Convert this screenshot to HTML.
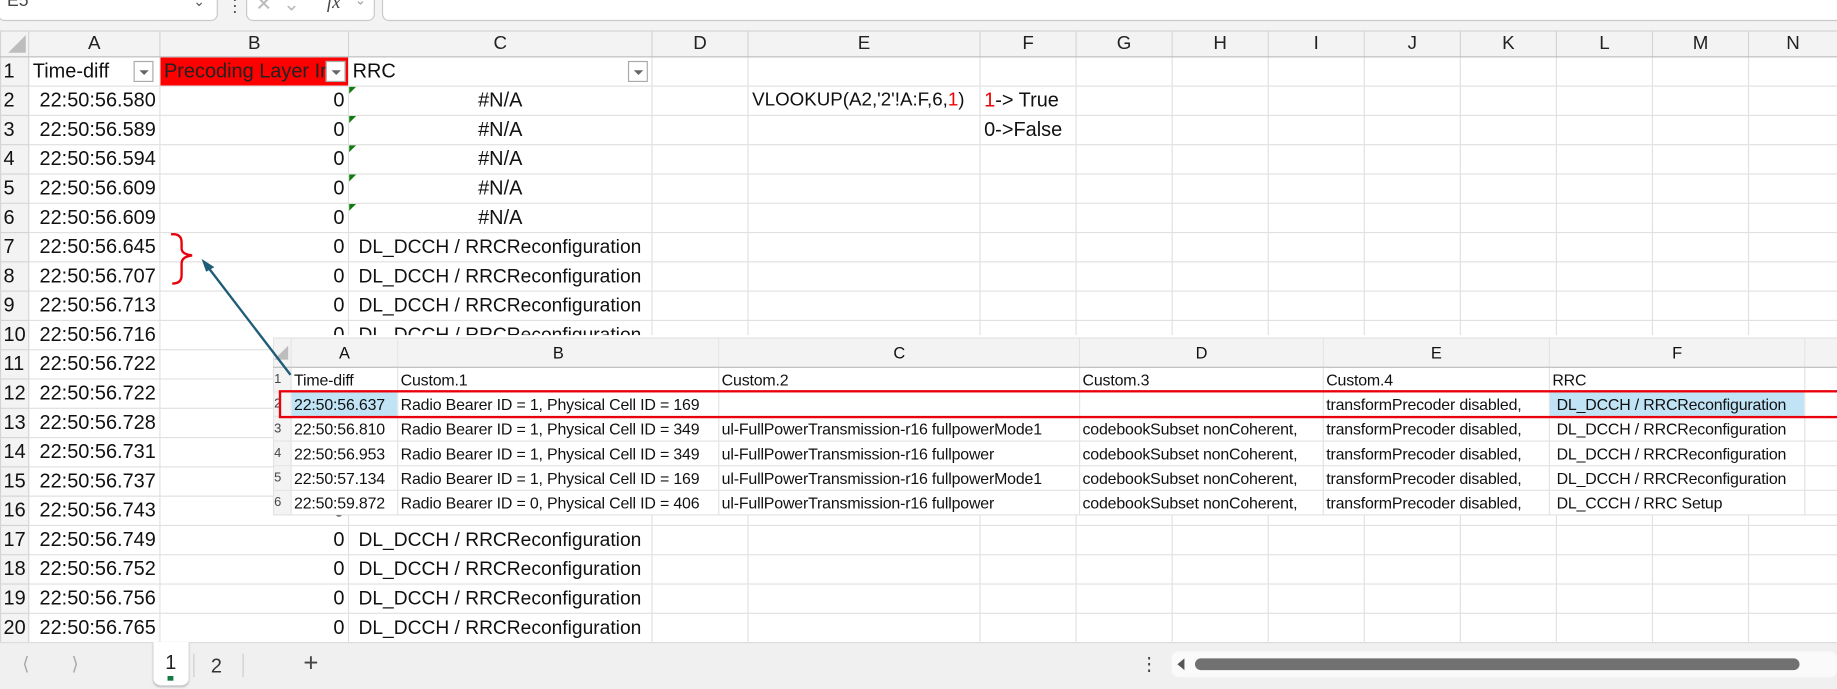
<!DOCTYPE html>
<html><head><meta charset="utf-8"><style>
html,body{margin:0;padding:0;width:1837px;height:689px;overflow:hidden;background:#fff}
#s{position:absolute;left:0;top:0;width:1568px;height:588px;transform:scale(1.17156);transform-origin:0 0;background:#f3f3f3;font-family:"Liberation Sans",sans-serif;color:#111;overflow:hidden}
.abs{position:absolute}
table{border-collapse:collapse;table-layout:fixed}
#m{position:absolute;left:0;top:26px;background:#fff;width:1568px}
#m td{border:1px solid #e1e1e1;height:25px;padding:0 3px;font-size:17px;white-space:nowrap;overflow:hidden;box-sizing:border-box}
#m tr.h td{background:#f3f3f3;height:22px;text-align:center;font-size:16px;color:#222;border-color:#d4d4d4;border-bottom:1px solid #bbb}
#m td.rn{background:#f3f3f3;text-align:left;padding-left:2px;font-size:17px;border-right:1px solid #bbb;border-color:#d4d4d4}
.r{text-align:right}.c{text-align:center}
.cc{padding-left:8px!important;font-size:16.4px!important}
.fb{position:absolute;width:17px;height:18px;border:1px solid #aaa;background:#fff;box-sizing:border-box;top:3px}
.fb:after{content:"";position:absolute;left:4px;top:7px;border-left:4px solid transparent;border-right:4px solid transparent;border-top:4px solid #666}
.tri{position:relative}
.tri:before{content:"";position:absolute;left:0;top:0;border-right:6px solid transparent;border-top:6px solid #107c10}
#o{position:absolute;left:233px;top:286px;width:1335px;height:153px;background:#fff}
#o table{position:absolute;left:0;top:2px;background:#fff;width:1335px}
#o td{border:1px solid #e3e3e3;height:21px;padding:0 2px;font-size:13.6px;letter-spacing:-0.15px;white-space:nowrap;overflow:hidden;box-sizing:border-box}
#o tr.h td{background:#f3f3f3;height:25px;text-align:center;font-size:14px;border-bottom:1px solid #bbb}
#o td.rn{background:#f3f3f3;font-size:11px;color:#444;padding:0}
.bl{background:#c0e4f5}
</style></head><body><div id="s">
<div class="abs" style="left:-2px;top:-10px;width:186px;height:26px;background:#fff;border:1px solid #c8c8c8;border-radius:6px"></div>
<div class="abs" style="left:6px;top:-8px;font-size:15px;color:#444">E5</div>
<div class="abs" style="left:165px;top:-6px;font-size:12px;color:#555">&#8964;</div>
<div class="abs" style="left:193px;top:-4px;font-size:15px;color:#555">&#8942;</div>
<div class="abs" style="left:210px;top:-10px;width:108px;height:26px;background:#fff;border:1px solid #c8c8c8;border-radius:6px"></div>
<div class="abs" style="left:218px;top:-6px;font-size:17px;color:#bbb">&#10005;&nbsp;&nbsp;&#8964;</div>
<div class="abs" style="left:279px;top:-6px;font-size:16px;font-style:italic;font-family:'Liberation Serif',serif;color:#444">fx</div>
<div class="abs" style="left:303px;top:-6px;font-size:11px;color:#999">&#8964;</div>
<div class="abs" style="left:326px;top:-10px;width:1250px;height:26px;background:#fff;border:1px solid #c8c8c8;border-radius:6px"></div>

<table id="m">
<colgroup><col style="width:24px"><col style="width:112px"><col style="width:161px"><col style="width:259px"><col style="width:82px"><col style="width:198px"><col style="width:82px"><col style="width:82px"><col style="width:82px"><col style="width:82px"><col style="width:82px"><col style="width:82px"><col style="width:82px"><col style="width:82px"><col style="width:76px"></colgroup>
<tr class="h"><td style="background:#f3f3f3"><div style="width:0;height:0;border-left:15px solid transparent;border-bottom:15px solid #bdbdbd;margin-left:3px"></div></td><td>A</td><td>B</td><td>C</td><td>D</td><td>E</td><td>F</td><td>G</td><td>H</td><td>I</td><td>J</td><td>K</td><td>L</td><td>M</td><td>N</td></tr>
<tr><td class="rn">1</td><td style="position:relative">Time-diff<span class="fb" style="left:89px"></span></td><td style="position:relative;background:#ff0000;color:#222">Precoding Layer In<span class="fb" style="left:141px"></span></td><td style="position:relative">RRC<span class="fb" style="left:238px"></span></td><td></td><td></td><td></td><td></td><td></td><td></td><td></td><td></td><td></td><td></td><td></td></tr>
<tr><td class="rn">2</td><td class="r">22:50:56.580</td><td class="r">0</td><td class="c tri">#N/A</td><td></td><td style="font-size:16px">VLOOKUP(A2,'2'!A:F,6,<span style="color:#e00">1</span>)</td><td><span style="color:#e00">1</span>-&gt; True</td><td></td><td></td><td></td><td></td><td></td><td></td><td></td><td></td></tr>
<tr><td class="rn">3</td><td class="r">22:50:56.589</td><td class="r">0</td><td class="c tri">#N/A</td><td></td><td></td><td>0-&gt;False</td><td></td><td></td><td></td><td></td><td></td><td></td><td></td><td></td></tr>
<tr><td class="rn">4</td><td class="r">22:50:56.594</td><td class="r">0</td><td class="c tri">#N/A</td><td></td><td></td><td></td><td></td><td></td><td></td><td></td><td></td><td></td><td></td><td></td></tr>
<tr><td class="rn">5</td><td class="r">22:50:56.609</td><td class="r">0</td><td class="c tri">#N/A</td><td></td><td></td><td></td><td></td><td></td><td></td><td></td><td></td><td></td><td></td><td></td></tr>
<tr><td class="rn">6</td><td class="r">22:50:56.609</td><td class="r">0</td><td class="c tri">#N/A</td><td></td><td></td><td></td><td></td><td></td><td></td><td></td><td></td><td></td><td></td><td></td></tr>
<tr><td class="rn">7</td><td class="r">22:50:56.645</td><td class="r">0</td><td class="cc">DL_DCCH / RRCReconfiguration</td><td></td><td></td><td></td><td></td><td></td><td></td><td></td><td></td><td></td><td></td><td></td></tr>
<tr><td class="rn">8</td><td class="r">22:50:56.707</td><td class="r">0</td><td class="cc">DL_DCCH / RRCReconfiguration</td><td></td><td></td><td></td><td></td><td></td><td></td><td></td><td></td><td></td><td></td><td></td></tr>
<tr><td class="rn">9</td><td class="r">22:50:56.713</td><td class="r">0</td><td class="cc">DL_DCCH / RRCReconfiguration</td><td></td><td></td><td></td><td></td><td></td><td></td><td></td><td></td><td></td><td></td><td></td></tr>
<tr><td class="rn">10</td><td class="r">22:50:56.716</td><td class="r">0</td><td class="cc">DL_DCCH / RRCReconfiguration</td><td></td><td></td><td></td><td></td><td></td><td></td><td></td><td></td><td></td><td></td><td></td></tr>
<tr><td class="rn">11</td><td class="r">22:50:56.722</td><td class="r">0</td><td></td><td></td><td></td><td></td><td></td><td></td><td></td><td></td><td></td><td></td><td></td><td></td></tr>
<tr><td class="rn">12</td><td class="r">22:50:56.722</td><td class="r">0</td><td></td><td></td><td></td><td></td><td></td><td></td><td></td><td></td><td></td><td></td><td></td><td></td></tr>
<tr><td class="rn">13</td><td class="r">22:50:56.728</td><td class="r">0</td><td></td><td></td><td></td><td></td><td></td><td></td><td></td><td></td><td></td><td></td><td></td><td></td></tr>
<tr><td class="rn">14</td><td class="r">22:50:56.731</td><td class="r">0</td><td></td><td></td><td></td><td></td><td></td><td></td><td></td><td></td><td></td><td></td><td></td><td></td></tr>
<tr><td class="rn">15</td><td class="r">22:50:56.737</td><td class="r">0</td><td></td><td></td><td></td><td></td><td></td><td></td><td></td><td></td><td></td><td></td><td></td><td></td></tr>
<tr><td class="rn">16</td><td class="r">22:50:56.743</td><td class="r">0</td><td></td><td></td><td></td><td></td><td></td><td></td><td></td><td></td><td></td><td></td><td></td><td></td></tr>
<tr><td class="rn">17</td><td class="r">22:50:56.749</td><td class="r">0</td><td class="cc">DL_DCCH / RRCReconfiguration</td><td></td><td></td><td></td><td></td><td></td><td></td><td></td><td></td><td></td><td></td><td></td></tr>
<tr><td class="rn">18</td><td class="r">22:50:56.752</td><td class="r">0</td><td class="cc">DL_DCCH / RRCReconfiguration</td><td></td><td></td><td></td><td></td><td></td><td></td><td></td><td></td><td></td><td></td><td></td></tr>
<tr><td class="rn">19</td><td class="r">22:50:56.756</td><td class="r">0</td><td class="cc">DL_DCCH / RRCReconfiguration</td><td></td><td></td><td></td><td></td><td></td><td></td><td></td><td></td><td></td><td></td><td></td></tr>
<tr><td class="rn">20</td><td class="r">22:50:56.765</td><td class="r">0</td><td class="cc">DL_DCCH / RRCReconfiguration</td><td></td><td></td><td></td><td></td><td></td><td></td><td></td><td></td><td></td><td></td><td></td></tr>
<tr><td class="rn"></td><td></td><td></td><td></td><td></td><td></td><td></td><td></td><td></td><td></td><td></td><td></td><td></td><td></td><td></td></tr>
</table>

<div id="o">
<table>
<colgroup><col style="width:15px"><col style="width:91px"><col style="width:274px"><col style="width:308px"><col style="width:208px"><col style="width:193px"><col style="width:218px"><col style="width:28px"></colgroup>
<tr class="h"><td class="rn"><div style="width:0;height:0;border-left:12px solid transparent;border-bottom:12px solid #bdbdbd"></div></td><td>A</td><td>B</td><td>C</td><td>D</td><td>E</td><td>F</td><td></td></tr>
<tr><td class="rn">1</td><td>Time-diff</td><td>Custom.1</td><td>Custom.2</td><td>Custom.3</td><td>Custom.4</td><td>RRC</td><td></td></tr>
<tr><td class="rn">2</td><td class="bl">22:50:56.637</td><td>Radio Bearer ID = 1, Physical Cell ID = 169</td><td></td><td></td><td>transformPrecoder disabled,</td><td class="bl">&nbsp;DL_DCCH / RRCReconfiguration</td><td></td></tr>
<tr><td class="rn">3</td><td>22:50:56.810</td><td>Radio Bearer ID = 1, Physical Cell ID = 349</td><td>ul-FullPowerTransmission-r16 fullpowerMode1</td><td>codebookSubset nonCoherent,</td><td>transformPrecoder disabled,</td><td>&nbsp;DL_DCCH / RRCReconfiguration</td><td></td></tr>
<tr><td class="rn">4</td><td>22:50:56.953</td><td>Radio Bearer ID = 1, Physical Cell ID = 349</td><td>ul-FullPowerTransmission-r16 fullpower</td><td>codebookSubset nonCoherent,</td><td>transformPrecoder disabled,</td><td>&nbsp;DL_DCCH / RRCReconfiguration</td><td></td></tr>
<tr><td class="rn">5</td><td>22:50:57.134</td><td>Radio Bearer ID = 1, Physical Cell ID = 169</td><td>ul-FullPowerTransmission-r16 fullpowerMode1</td><td>codebookSubset nonCoherent,</td><td>transformPrecoder disabled,</td><td>&nbsp;DL_DCCH / RRCReconfiguration</td><td></td></tr>
<tr><td class="rn">6</td><td>22:50:59.872</td><td>Radio Bearer ID = 0, Physical Cell ID = 406</td><td>ul-FullPowerTransmission-r16 fullpower</td><td>codebookSubset nonCoherent,</td><td>transformPrecoder disabled,</td><td>&nbsp;DL_CCCH / RRC Setup</td><td></td></tr>
</table>
<div class="abs" style="left:5px;top:47px;width:1340px;height:20px;border:2px solid #e8000b"></div>
</div>

<svg class="abs" style="left:0;top:0" width="1568" height="588">
<path d="M146 200 Q155 199 155 207 L155 212 Q155 217 164 218 Q155 219 155 225 L155 235 Q155 242 147 242" fill="none" stroke="#e8000b" stroke-width="2"/>
<line x1="248" y1="320" x2="176" y2="226" stroke="#1f5c7a" stroke-width="2"/>
<path d="M172 221 L183 228 L176 232 Z" fill="#1f5c7a"/>
</svg>

<div class="abs" style="left:0;top:548px;width:1568px;height:40px;background:#f0f0f0;border-top:1px solid #ddd"></div>
<div class="abs" style="left:19px;top:557px;font-size:16px;color:#aaa">&#10216;</div>
<div class="abs" style="left:61px;top:557px;font-size:16px;color:#aaa">&#10217;</div>
<div class="abs" style="left:131px;top:548px;width:30px;height:37px;background:#fff;border-radius:0 0 6px 6px;box-shadow:0 1px 2px #bbb"></div>
<div class="abs" style="left:141px;top:556px;font-size:17px;color:#222">1</div>
<div class="abs" style="left:143px;top:577px;width:5px;height:4px;background:#107c41"></div>
<div class="abs" style="left:165px;top:558px;width:1px;height:20px;background:#ccc"></div>
<div class="abs" style="left:180px;top:559px;font-size:17px;color:#333">2</div>
<div class="abs" style="left:207px;top:558px;width:1px;height:20px;background:#ccc"></div>
<div class="abs" style="left:259px;top:553px;font-size:22px;color:#444">+</div>
<div class="abs" style="left:973px;top:557px;font-size:16px;color:#444">&#8942;</div>
<div class="abs" style="left:1000px;top:556px;width:568px;height:22px;background:#fafafa;border-radius:6px"></div>
<div class="abs" style="left:1005px;top:562px;border-right:6px solid #555;border-top:5px solid transparent;border-bottom:5px solid transparent"></div>
<div class="abs" style="left:1020px;top:562px;width:516px;height:10px;background:#717171;border-radius:5px"></div>
</div></body></html>
